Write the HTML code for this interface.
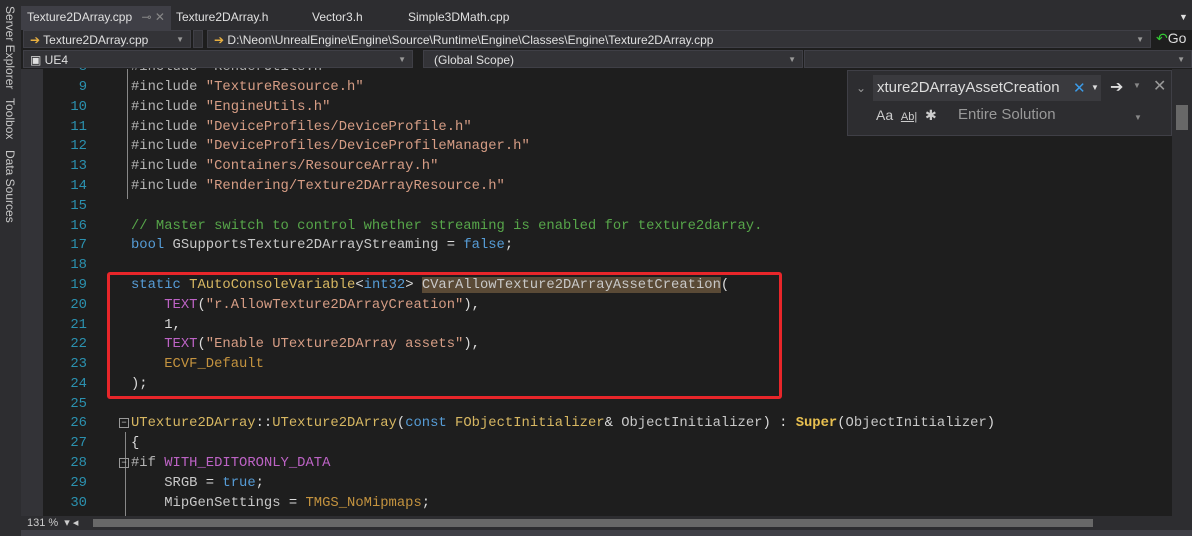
<!DOCTYPE html>
<html><head><meta charset="utf-8"><style>
*{margin:0;padding:0;box-sizing:border-box}
body{width:1192px;height:536px;background:#1e1e1e;overflow:hidden;position:relative;font-family:"Liberation Sans",sans-serif;color:#dcdcdc}
.abs{position:absolute}
.side{left:0;top:0;width:21px;height:536px;background:#2d2d30;z-index:3}
.vt{position:absolute;left:3px;writing-mode:vertical-rl;font-size:12px;color:#c8c8c8}
.tabs{left:21px;top:0;width:1171px;height:30px;background:#2d2d30;font-size:12px;z-index:3}
.tab{position:absolute;top:10px;color:#e0e0e0}
.bar{left:21px;height:20px;background:#2d2d30;font-size:12px;z-index:3}
.combo{position:absolute;top:1px;height:18px;background:#333337;border:1px solid #3f3f46;color:#e0e0e0;padding:2px 0 0 6px;white-space:nowrap}
.code{font-family:"Liberation Mono",monospace;font-size:13.85px;white-space:pre;position:absolute;left:131px;line-height:20px}
.ln{position:absolute;left:40px;width:47px;text-align:right;font-family:"Liberation Mono",monospace;font-size:13.85px;color:#2b91af;line-height:20px}
.k{color:#569cd6}.s{color:#d69d85}.c{color:#57a64a}.m{color:#bd63c5}.t{color:#d7b762}.e{color:#c4933f}.i{color:#c8c8c8}.p{color:#b4b4b4}
</style></head><body>
<div class="abs side"><div class="vt" style="top:6px">Server Explorer</div><div class="vt" style="top:98px">Toolbox</div><div class="vt" style="top:150px">Data Sources</div></div>
<div class="abs tabs">
<div class="abs" style="left:0;top:6px;width:150px;height:24px;background:#3f3f46"></div>
<div class="tab" style="left:6px">Texture2DArray.cpp <span style="color:#888;margin-left:6px">⊸ ✕</span></div>
<div class="tab" style="left:155px">Texture2DArray.h</div>
<div class="tab" style="left:291px">Vector3.h</div>
<div class="tab" style="left:387px">Simple3DMath.cpp</div>
<div class="tab" style="left:1158px;top:12px;font-size:9px">▼</div>
</div>
<div class="abs bar" style="top:29px">
<div class="combo" style="left:2px;width:168px"><span style="color:#e8b040">➔</span> Texture2DArray.cpp<span style="position:absolute;right:6px;font-size:8px;top:4px;color:#999">▼</span></div>
<div class="combo" style="left:172px;width:10px;padding:0"></div>
<div class="combo" style="left:186px;width:944px"><span style="color:#e8b040">➔</span> D:\Neon\UnrealEngine\Engine\Source\Runtime\Engine\Classes\Engine\Texture2DArray.cpp<span style="position:absolute;right:6px;font-size:8px;top:4px;color:#999">▼</span></div>
<div class="abs" style="left:1135px;top:1px;font-size:14px"><span style="color:#3c3">↶</span>Go</div>
</div>
<div class="abs bar" style="top:49px">
<div class="combo" style="left:2px;width:390px">▣ UE4<span style="position:absolute;right:6px;font-size:8px;top:4px;color:#999">▼</span></div>
<div class="combo" style="left:402px;width:380px;padding-left:10px">(Global Scope)<span style="position:absolute;right:6px;font-size:8px;top:4px;color:#999">▼</span></div>
<div class="combo" style="left:783px;width:388px"><span style="position:absolute;right:6px;font-size:8px;top:4px;color:#999">▼</span></div>
</div>
<div class="abs" style="left:21px;top:69px;width:22px;height:447px;background:#333337"></div>
<div class="abs" style="left:127px;top:69px;width:1px;height:130px;background:#888"></div>
<div class="abs" style="left:125px;top:432px;width:1px;height:84px;background:#888"></div>

<div class="ln" style="top:57px">8</div><div class="code" style="top:57px;color:#aaa">#include "RenderUtils.h"</div>
<div class="ln" style="top:77px">9</div><div class="code" style="top:77px"><span class="p">#include</span> <span class="s">"TextureResource.h"</span></div>
<div class="ln" style="top:97px">10</div><div class="code" style="top:97px"><span class="p">#include</span> <span class="s">"EngineUtils.h"</span></div>
<div class="ln" style="top:117px">11</div><div class="code" style="top:117px"><span class="p">#include</span> <span class="s">"DeviceProfiles/DeviceProfile.h"</span></div>
<div class="ln" style="top:136px">12</div><div class="code" style="top:136px"><span class="p">#include</span> <span class="s">"DeviceProfiles/DeviceProfileManager.h"</span></div>
<div class="ln" style="top:156px">13</div><div class="code" style="top:156px"><span class="p">#include</span> <span class="s">"Containers/ResourceArray.h"</span></div>
<div class="ln" style="top:176px">14</div><div class="code" style="top:176px"><span class="p">#include</span> <span class="s">"Rendering/Texture2DArrayResource.h"</span></div>
<div class="ln" style="top:196px">15</div>
<div class="ln" style="top:216px">16</div><div class="code c" style="top:216px">// Master switch to control whether streaming is enabled for texture2darray.</div>
<div class="ln" style="top:235px">17</div><div class="code" style="top:235px"><span class="k">bool</span> <span class="i">GSupportsTexture2DArrayStreaming</span> = <span class="k">false</span>;</div>
<div class="ln" style="top:255px">18</div>
<div class="ln" style="top:275px">19</div><div class="code" style="top:275px"><span class="k">static</span> <span class="t">TAutoConsoleVariable</span>&lt;<span class="k">int32</span>&gt; <span class="i" style="background:#5a4a36">CVarAllowTexture2DArrayAssetCreation</span>(</div>
<div class="ln" style="top:295px">20</div><div class="code" style="top:295px">    <span class="m">TEXT</span>(<span class="s">"r.AllowTexture2DArrayCreation"</span>),</div>
<div class="ln" style="top:315px">21</div><div class="code" style="top:315px">    1,</div>
<div class="ln" style="top:334px">22</div><div class="code" style="top:334px">    <span class="m">TEXT</span>(<span class="s">"Enable UTexture2DArray assets"</span>),</div>
<div class="ln" style="top:354px">23</div><div class="code" style="top:354px">    <span class="e">ECVF_Default</span></div>
<div class="ln" style="top:374px">24</div><div class="code" style="top:374px">);</div>
<div class="ln" style="top:394px">25</div>
<div class="ln" style="top:413px">26</div><div class="code" style="top:413px"><span class="t">UTexture2DArray</span>::<span class="t">UTexture2DArray</span>(<span class="k">const</span> <span class="t">FObjectInitializer</span>&amp; <span class="i">ObjectInitializer</span>) : <b style="color:#e8c050">Super</b>(<span class="i">ObjectInitializer</span>)</div>
<div class="ln" style="top:433px">27</div><div class="code" style="top:433px">{</div>
<div class="ln" style="top:453px">28</div><div class="code" style="top:453px"><span class="p">#if</span> <span class="m">WITH_EDITORONLY_DATA</span></div>
<div class="ln" style="top:473px">29</div><div class="code" style="top:473px">    <span class="i">SRGB</span> = <span class="k">true</span>;</div>
<div class="ln" style="top:493px">30</div><div class="code" style="top:493px">    <span class="i">MipGenSettings</span> = <span class="e">TMGS_NoMipmaps</span>;</div>
<div class="abs" style="left:119px;top:418px;width:10px;height:10px;border:1px solid #999;font-size:9px;line-height:7px;text-align:center;color:#ccc">−</div>
<div class="abs" style="left:119px;top:458px;width:10px;height:10px;border:1px solid #999;font-size:9px;line-height:7px;text-align:center;color:#ccc">−</div>

<div class="abs" style="left:107px;top:272px;width:675px;height:127px;border:3px solid #e8262a;border-radius:3px"></div>

<div class="abs" style="left:847px;top:70px;width:325px;height:66px;background:#2d2d30;border:1px solid #3f3f46">
<div class="abs" style="left:8px;top:10px;color:#999;font-size:12px">⌄</div>
<div class="abs" style="left:25px;top:4px;width:228px;height:26px;background:#3a3a3e;font-size:15px;padding:4px 0 0 4px;color:#ddd;white-space:nowrap;overflow:hidden">xture2DArrayAssetCreation<span style="position:absolute;left:200px;top:4px;color:#3b9be8">✕</span><span style="position:absolute;left:218px;top:8px;font-size:8px">▼</span></div>
<div class="abs" style="left:262px;top:6px;font-size:16px;color:#ddd">➔</div>
<div class="abs" style="left:285px;top:10px;font-size:8px;color:#888">▼</div>
<div class="abs" style="left:305px;top:5px;font-size:16px;color:#999">✕</div>
<div class="abs" style="left:28px;top:36px;font-size:14px;color:#ccc;white-space:nowrap">Aa&nbsp; <u style="font-size:11px">Ab|</u>&nbsp; ✱</div>
<div class="abs" style="left:110px;top:35px;font-size:15px;color:#999">Entire Solution</div>
<div class="abs" style="left:286px;top:42px;font-size:8px;color:#888">▼</div>
</div>

<div class="abs" style="left:1172px;top:69px;width:20px;height:447px;background:#2d2d30"></div>
<div class="abs" style="left:1176px;top:105px;width:12px;height:25px;background:#686868"></div>
<div class="abs" style="left:21px;top:516px;width:1171px;height:14px;background:#2d2d30;font-size:11px;color:#ccc;padding-left:6px">131 % &nbsp;▾ ◂</div>
<div class="abs" style="left:93px;top:519px;width:1000px;height:8px;background:#686868"></div>
<div class="abs" style="left:0;top:530px;width:1192px;height:6px;background:#3f3f46"></div>
</body></html>
